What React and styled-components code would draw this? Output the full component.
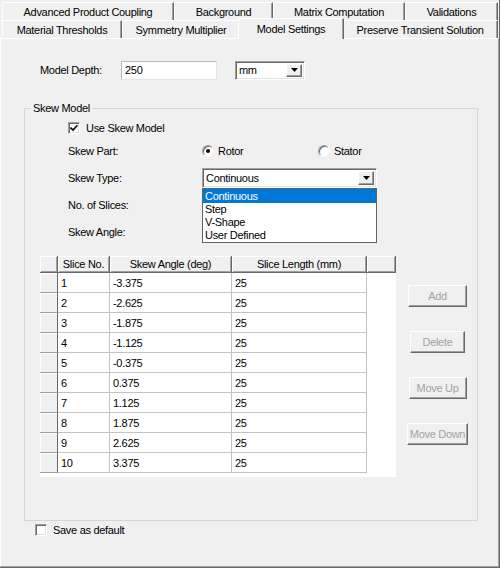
import React from "react";
import styled, { createGlobalStyle } from "styled-components";

const GlobalStyle = createGlobalStyle`
  html, body {
    margin: 0;
    padding: 0;
    background: #f0f0f0;
  }
  body {
    font-family: "Liberation Sans", Arial, sans-serif;
    font-size: 11px;
    letter-spacing: -0.3px;
    color: #000;
  }
  * {
    box-sizing: border-box;
  }
`;

const Window = styled.div`
  width: 500px;
  height: 568px;
  background: #f0f0f0;
  border-right: 1px solid #696969;
  border-bottom: 1px solid #696969;
  display: flex;
  flex-direction: column;
  overflow: hidden;
`;

const TabStrip = styled.div`
  height: 38px;
  padding: 2px 0 0 2px;
  display: flex;
  flex-direction: column;
`;

const TabRow = styled.div`
  display: flex;
  height: 18px;
`;

const Tab = styled.div`
  width: ${({ $w }) => $w}px;
  height: 18px;
  display: flex;
  align-items: center;
  justify-content: center;
  white-space: nowrap;
  background: #f0f0f0;
  border-top: 1px solid #fff;
  border-left: 1px solid #fff;
  border-right: 1px solid #696969;
  box-shadow: inset -1px 0 0 #a0a0a0;
`;

const ActiveTab = styled(Tab)`
  position: relative;
  z-index: 2;
  width: ${({ $w }) => $w + 4}px;
  height: 21px;
  margin: -2px -2px -1px -2px;
  padding-bottom: 1px;
`;

const Panel = styled.div`
  flex: 1;
  display: flex;
  flex-direction: column;
  border-top: 1px solid #fff;
  border-left: 1px solid #fff;
  border-right: 1px solid #a0a0a0;
  border-bottom: 1px solid #a0a0a0;
`;

const DepthRow = styled.div`
  display: flex;
  align-items: center;
  height: 18px;
  margin: 22px 0 0 39px;
`;

const Label = styled.span`
  width: ${({ $w }) => ($w ? `${$w}px` : "auto")};
  white-space: nowrap;
`;

const TextBox = styled.div`
  width: ${({ $w }) => $w}px;
  height: 19px;
  background: #fff;
  border: 1px solid;
  border-color: #b9b9b9 #e3e3e3 #e3e3e3 #b9b9b9;
  padding: 0 3px;
  display: flex;
  align-items: center;
`;

const Combo = styled.div`
  position: relative;
  width: ${({ $w }) => $w}px;
  height: ${({ $h }) => $h || 19}px;
  margin-left: ${({ $ml }) => $ml || 0}px;
  background: #fff;
  border: 1px solid;
  border-color: #a0a0a0 #fff #fff #a0a0a0;
  box-shadow: inset 1px 1px 0 #696969, inset -1px -1px 0 #e3e3e3;
  display: flex;
  align-items: center;
  padding: 0 0 0 3px;
`;

const ComboText = styled.span`
  flex: 1;
  white-space: nowrap;
`;

const ArrowButton = styled.div`
  width: 16px;
  align-self: stretch;
  margin: 2px 2px 2px 0;
  background: #f0f0f0;
  border: 1px solid;
  border-color: #fff #696969 #696969 #fff;
  box-shadow: inset -1px -1px 0 #a0a0a0;
  display: flex;
  align-items: center;
  justify-content: center;
`;

const GroupBox = styled.section`
  width: 454px;
  margin: 29px 0 0 23px;
  padding: 0 0 43px 0;
  border: 1px solid #d5d5d5;
`;

const Caption = styled.div`
  width: fit-content;
  margin: -7px 0 0 6px;
  padding: 0 2px;
  line-height: 13px;
  background: #f0f0f0;
`;

const Form = styled.div`
  display: grid;
  grid-template-columns: 134px 116px 60px;
  grid-template-rows: 19px repeat(4, 27px);
  align-items: center;
  margin: 3px 0 0 43px;
`;

const FullRow = styled.div`
  grid-column: 1 / -1;
  display: flex;
  align-items: center;
`;

const Field = styled.div`
  grid-column: ${({ $span }) => ($span ? "2 / 4" : "auto")};
  position: relative;
  display: flex;
  align-items: center;
`;

const Check = styled.span`
  width: 12px;
  height: 12px;
  margin-right: ${({ $gap }) => $gap}px;
  background: #fff;
  border: 1px solid;
  border-color: #a0a0a0 #fff #fff #a0a0a0;
  box-shadow: inset 1px 1px 0 #696969, inset -1px -1px 0 #e3e3e3;
  display: flex;
  align-items: center;
  justify-content: center;
`;

const Radio = styled.span`
  width: 12px;
  height: 12px;
  margin-right: 4px;
  border-radius: 50%;
  background: #fff;
  border: 1px solid;
  border-color: #a0a0a0 #f8f8f8 #f8f8f8 #a0a0a0;
  box-shadow: inset 1px 1px 0 #696969;
  display: flex;
  align-items: center;
  justify-content: center;
  &::after {
    content: "";
    width: 4px;
    height: 4px;
    border-radius: 50%;
    background: ${({ $on }) => ($on ? "#000" : "transparent")};
  }
`;

const DropList = styled.ul`
  position: absolute;
  top: 100%;
  left: 0;
  z-index: 5;
  width: 175px;
  margin: 0;
  padding: 0;
  list-style: none;
  background: #fff;
  border: 1px solid #646464;
`;

const DropItem = styled.li`
  height: ${({ $sel }) => ($sel ? 14 : 13)}px;
  line-height: ${({ $sel }) => ($sel ? 14 : 13)}px;
  padding-left: 2px;
  background: ${({ $sel }) => ($sel ? "#0078d7" : "#fff")};
  color: ${({ $sel }) => ($sel ? "#fff" : "#000")};
`;

const TableRow = styled.div`
  display: flex;
  gap: 11px;
  margin: 11px 0 0 15px;
`;

const TableArea = styled.div`
  width: 356px;
  height: 221px;
  background: #fff;
`;

const Grid = styled.table`
  width: 356px;
  table-layout: fixed;
  border-collapse: separate;
  border-spacing: 0;
`;

const Col = styled.col`
  width: ${({ $w }) => $w}px;
`;

const HeadCell = styled.th`
  height: 17px;
  padding: 0;
  font-weight: normal;
  text-align: center;
  white-space: nowrap;
  background: #f0f0f0;
  border-right: 1px solid #696969;
  border-bottom: 1px solid #696969;
  box-shadow: inset 1px 1px 0 #fff, inset -1px -1px 0 #a0a0a0;
`;

const RowHead = styled.td`
  height: 20px;
  padding: 0;
  background: #f0f0f0;
  border-right: 1px solid #696969;
  border-bottom: 1px solid #a0a0a0;
  box-shadow: inset 1px 1px 0 #fff;
`;

const Cell = styled.td`
  height: 20px;
  padding: 1px 0 0 3px;
  white-space: nowrap;
  border-right: 1px solid #c3c3c3;
  border-bottom: 1px solid #c3c3c3;
`;

const EmptyCell = styled.td`
  padding: 0;
`;

const ButtonColumn = styled.div`
  width: 61px;
  padding-top: 29px;
  display: flex;
  flex-direction: column;
  align-items: center;
  gap: 24px;
`;

const Button = styled.button`
  width: ${({ $w }) => $w}px;
  height: 22px;
  padding: 0;
  font: inherit;
  letter-spacing: inherit;
  color: #a3a3a3;
  white-space: nowrap;
  overflow: hidden;
  background: #f0f0f0;
  border: 1px solid;
  border-color: #fff #696969 #696969 #fff;
  box-shadow: inset -1px -1px 0 #a0a0a0;
`;

const SaveRow = styled.div`
  display: flex;
  align-items: center;
  height: 16px;
  margin: 1px 0 0 34px;
`;

const DownArrow = () => (
  <svg width="7" height="4" viewBox="0 0 7 4">
    <path d="M0 0h7L3.5 4z" fill="#000" />
  </svg>
);

const CheckMark = () => (
  <svg width="8" height="8" viewBox="0 0 8 8">
    <path d="M0.5 3.5 L3 6 L7.5 1.2" fill="none" stroke="#000" strokeWidth="1.6" />
  </svg>
);

const topTabs = [
  ["Advanced Product Coupling", 172],
  ["Background", 99],
  ["Matrix Computation", 132],
  ["Validations", 93],
];

const slices = [
  ["1", "-3.375"],
  ["2", "-2.625"],
  ["3", "-1.875"],
  ["4", "-1.125"],
  ["5", "-0.375"],
  ["6", "0.375"],
  ["7", "1.125"],
  ["8", "1.875"],
  ["9", "2.625"],
  ["10", "3.375"],
];

export default function App() {
  return (
    <>
      <GlobalStyle />
      <Window>
        <TabStrip>
          <TabRow>
            {topTabs.map(([t, w]) => (
              <Tab key={t} $w={w}>{t}</Tab>
            ))}
          </TabRow>
          <TabRow>
            <Tab $w={120}>Material Thresholds</Tab>
            <Tab $w={118}>Symmetry Multiplier</Tab>
            <ActiveTab $w={102}>Model Settings</ActiveTab>
            <Tab $w={156}>Preserve Transient Solution</Tab>
          </TabRow>
        </TabStrip>

        <Panel>
          <DepthRow>
            <Label $w={81}>Model Depth:</Label>
            <TextBox $w={96}>250</TextBox>
            <Combo $w={70} $ml={18}>
              <ComboText>mm</ComboText>
              <ArrowButton><DownArrow /></ArrowButton>
            </Combo>
          </DepthRow>

          <GroupBox>
            <Caption>Skew Model</Caption>
            <Form>
              <FullRow>
                <Check $gap={6}><CheckMark /></Check>
                Use Skew Model
              </FullRow>

              <Label>Skew Part:</Label>
              <Field>
                <Radio $on />
                Rotor
              </Field>
              <Field>
                <Radio />
                Stator
              </Field>

              <Label>Skew Type:</Label>
              <Field $span>
                <Combo $w={175} $h={20}>
                  <ComboText>Continuous</ComboText>
                  <ArrowButton><DownArrow /></ArrowButton>
                </Combo>
                <DropList>
                  <DropItem $sel>Continuous</DropItem>
                  <DropItem>Step</DropItem>
                  <DropItem>V-Shape</DropItem>
                  <DropItem>User Defined</DropItem>
                </DropList>
              </Field>

              <Label>No. of Slices:</Label>
              <Field $span>
                <TextBox $w={143} />
              </Field>

              <Label>Skew Angle:</Label>
              <Field $span>
                <TextBox $w={143} />
              </Field>
            </Form>

            <TableRow>
              <TableArea>
                <Grid>
                  <colgroup>
                    <Col $w={18} />
                    <Col $w={52} />
                    <Col $w={122} />
                    <Col $w={135} />
                    <Col $w={29} />
                  </colgroup>
                  <thead>
                    <tr>
                      <HeadCell />
                      <HeadCell>Slice No.</HeadCell>
                      <HeadCell>Skew Angle (deg)</HeadCell>
                      <HeadCell>Slice Length (mm)</HeadCell>
                      <HeadCell />
                    </tr>
                  </thead>
                  <tbody>
                    {slices.map(([n, a]) => (
                      <tr key={n}>
                        <RowHead />
                        <Cell>{n}</Cell>
                        <Cell>{a}</Cell>
                        <Cell>25</Cell>
                        <EmptyCell />
                      </tr>
                    ))}
                  </tbody>
                </Grid>
              </TableArea>
              <ButtonColumn>
                <Button $w={59} disabled>Add</Button>
                <Button $w={55} disabled>Delete</Button>
                <Button $w={58} disabled>Move Up</Button>
                <Button $w={61} disabled>Move Down</Button>
              </ButtonColumn>
            </TableRow>
          </GroupBox>

          <SaveRow>
            <Check $gap={6} />
            Save as default
          </SaveRow>
        </Panel>
      </Window>
    </>
  );
}
